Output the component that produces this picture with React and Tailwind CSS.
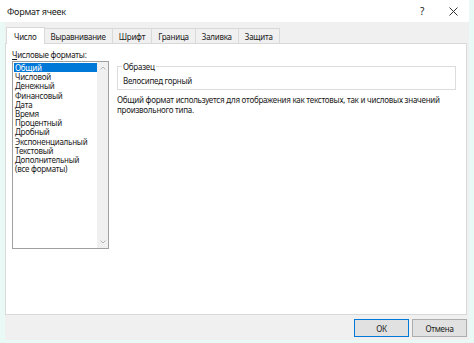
import React from 'react';

const formats = [
  'Общий',
  'Числовой',
  'Денежный',
  'Финансовый',
  'Дата',
  'Время',
  'Процентный',
  'Дробный',
  'Экспоненциальный',
  'Текстовый',
  'Дополнительный',
  '(все форматы)',
];

const tabs = ['Число', 'Выравнивание', 'Шрифт', 'Граница', 'Заливка', 'Защита'];

const App = () => {
  return (
    <div className="w-[474px] h-[343px] bg-[#e9faf6] p-[0_5px_3px_0] font-['Noto_Sans',sans-serif] text-[8px] tracking-[-0.25px] text-[#1a1a1a] leading-[9px]">
      <div className="h-full flex flex-col bg-[#f0f0f0] border-l-[5px] border-[#e9faf6]">
        {/* Title bar */}
        <div className="h-[22px] -ml-[5px] bg-white flex items-center pl-[7px] pr-[10px]">
          <span className="text-[9px]">Формат ячеек</span>
          <span className="ml-auto text-[10px] mr-[25px]">?</span>
          <svg width="9" height="9" viewBox="0 0 9 9" className="mr-[1px]">
            <path d="M0.5 0.5 L8.5 8.5 M8.5 0.5 L0.5 8.5" stroke="#333" strokeWidth="1" />
          </svg>
        </div>

        {/* Tabs */}
        <div className="flex pl-[1px] mt-[4px] h-[17px] items-end">
          {tabs.map((tab, i) => (
            <div
              key={tab}
              className={
                i === 0
                  ? 'h-[17px] px-[7px] flex items-center bg-white border border-b-0 border-[#d9d9d9] relative top-[1px] z-10'
                  : 'h-[15px] px-[6px] flex items-center bg-[#f0f0f0] border border-b-0 border-l-0 border-[#d9d9d9]'
              }
            >
              {tab}
            </div>
          ))}
        </div>

        {/* Panel */}
        <div className="mr-[2px] h-[272px] bg-white border border-[#d9d9d9] px-[6px] pt-[6px] flex gap-[8px]">
          <div className="flex flex-col w-[97px]">
            <div className="mb-[2px]">
              <span className="underline decoration-[0.5px] underline-offset-1">Ч</span>исловые форматы:
            </div>
            <div className="h-[188px] border border-[#a0a0a0] flex">
              <div className="flex-1 pt-px pl-px">
                {formats.map((f, i) => (
                  <div
                    key={f}
                    className={
                      i === 0
                        ? 'h-[9.2px] leading-[9.2px] bg-[#0078d7] text-white pl-[1px]'
                        : 'h-[9.2px] leading-[9.2px] pl-[1px]'
                    }
                  >
                    {f}
                  </div>
                ))}
              </div>
              <div className="w-[11px] bg-[#f0f0f0] flex flex-col justify-between items-center py-[4px]">
                <svg width="6" height="4" viewBox="0 0 6 4">
                  <path d="M0.5 3.5 L3 1 L5.5 3.5" stroke="#b5b5b5" fill="none" />
                </svg>
                <svg width="6" height="4" viewBox="0 0 6 4">
                  <path d="M0.5 0.5 L3 3 L5.5 0.5" stroke="#b5b5b5" fill="none" />
                </svg>
              </div>
            </div>
          </div>

          <div className="flex-1 pt-[16px] pr-[4px]">
            <div className="relative border border-[#dcdcdc] h-[24px] flex items-end pb-[4px] pl-[5px]">
              <span className="absolute -top-[5px] left-[4px] bg-white px-[1px]">Образец</span>
              Велосипед горный
            </div>
            <p className="mt-[5px] leading-[10px]">
              Общий формат используется для отображения как текстовых, так и числовых значений произвольного типа.
            </p>
          </div>
        </div>

        {/* Buttons */}
        <div className="flex justify-end gap-[3px] pr-[2px] mt-[4px]">
          <button className="w-[55px] h-[18px] bg-[#e1e1e1] border border-[#0078d7] flex items-center justify-center">
            ОК
          </button>
          <button className="w-[55px] h-[18px] bg-[#e1e1e1] border border-[#adadad] flex items-center justify-center">
            Отмена
          </button>
        </div>
      </div>
    </div>
  );
};

export default App;
